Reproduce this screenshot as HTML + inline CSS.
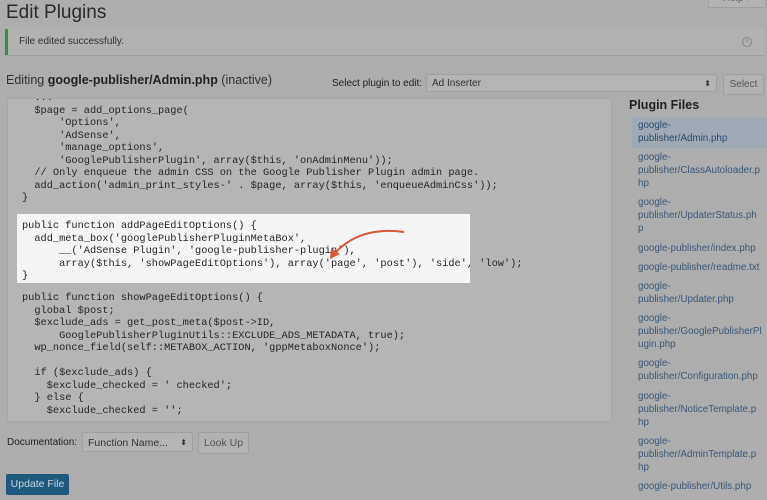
<!DOCTYPE html>
<html><head><meta charset="utf-8"><style>
body{margin:0;width:767px;height:500px;background:#adadad;font-family:"Liberation Sans",sans-serif;position:relative;overflow:hidden;color:#222}
.a{position:absolute}
pre{margin:0;font-family:"Liberation Mono",monospace;font-size:10.3px;line-height:12.5px;color:#262626}
.side div{color:#3b5878;font-size:9.8px;line-height:13px;margin-bottom:6.2px;padding-left:6px;white-space:nowrap}
</style></head><body>
<div class="a" style="left:708px;top:-8px;width:56px;height:14px;background:#b3b3b3;border:1px solid #9f9f9f;border-radius:2px;font-size:10px;color:#666;text-align:center;line-height:12px">Help ▾</div>
<div class="a" style="left:6px;top:2px;font-size:19px;color:#2a2a2a">Edit Plugins</div>
<div class="a" style="left:5px;top:29px;width:757px;height:26px;background:#b1b1b1;border-left:3px solid #3f8a3f;box-shadow:0 1px 1px rgba(0,0,0,.1)"></div>
<div class="a" style="left:19px;top:36px;font-size:10px;color:#333">File edited successfully.</div>
<div class="a" style="left:742px;top:37px;width:8px;height:8px;border:1px solid #888;border-radius:50%;font-size:7px;line-height:8px;text-align:center;color:#888">×</div>
<div class="a" style="left:6px;top:73px;font-size:12.5px;color:#333">Editing <b style="color:#222">google-publisher/Admin.php</b> (inactive)</div>
<div class="a" style="left:332px;top:78px;font-size:10px;color:#222">Select plugin to edit:</div>
<div class="a" style="left:426px;top:74px;width:291px;height:18px;background:#b4b4b4;border:1px solid #a0a0a0;border-radius:2px;font-size:10px;line-height:18px;color:#333;padding-left:5px;box-sizing:border-box">Ad Inserter<span style="position:absolute;right:5px;font-size:8px">⬍</span></div>
<div class="a" style="left:723px;top:74px;width:39px;height:19px;background:#b2b2b2;border:1px solid #9f9f9f;border-radius:2px;font-size:10px;line-height:19px;text-align:center;color:#555">Select</div>
<div class="a" style="left:7px;top:98px;width:603px;height:322px;background:#b5b5b5;border:1px solid #a6a6a6;overflow:hidden">
<pre style="position:absolute;left:14px;top:-7px">  ...
  $page = add_options_page(
      'Options',
      'AdSense',
      'manage_options',
      'GooglePublisherPlugin', array($this, 'onAdminMenu'));
  // Only enqueue the admin CSS on the Google Publisher Plugin admin page.
  add_action('admin_print_styles-' . $page, array($this, 'enqueueAdminCss'));
}







public function showPageEditOptions() {
  global $post;
  $exclude_ads = get_post_meta($post->ID,
      GooglePublisherPluginUtils::EXCLUDE_ADS_METADATA, true);
  wp_nonce_field(self::METABOX_ACTION, 'gppMetaboxNonce');

  if ($exclude_ads) {
    $exclude_checked = ' checked';
  } else {
    $exclude_checked = '';</pre>
</div>
<div class="a" style="left:17px;top:214px;width:453px;height:69px;background:#f5f5f5"></div>
<pre class="a" style="left:22px;top:220px">public function addPageEditOptions() {
  add_meta_box('googlePublisherPluginMetaBox',
      __('AdSense Plugin', 'google-publisher-plugin'),
      array($this, 'showPageEditOptions'), array('page', 'post'), 'side', 'low');
}</pre>
<svg class="a" style="left:0;top:0" width="767" height="500"><path d="M404 232 Q360 226 335 253" fill="none" stroke="#d9573c" stroke-width="2"/><path d="M330 259 L331 248 L340 254 Z" fill="#d9573c"/></svg>
<div class="a" style="left:7px;top:437px;font-size:10px;color:#222">Documentation:</div>
<div class="a" style="left:82px;top:432px;width:111px;height:20px;background:#b4b4b4;border:1px solid #a0a0a0;border-radius:2px;font-size:10.5px;line-height:20px;padding-left:5px;box-sizing:border-box;color:#333">Function Name...<span style="position:absolute;right:5px;font-size:8px">⬍</span></div>
<div class="a" style="left:198px;top:432px;width:49px;height:20px;background:#b2b2b2;border:1px solid #9f9f9f;border-radius:2px;font-size:10.5px;line-height:20px;text-align:center;color:#555">Look Up</div>
<div class="a" style="left:6px;top:474px;width:63px;height:21px;background:#1f5a7e;border-radius:2px;font-size:10.5px;line-height:21px;text-align:center;color:#c8d6e0">Update File</div>
<div class="a" style="left:629px;top:98px;font-size:12.5px;font-weight:bold;color:#222">Plugin Files</div>
<div class="a" style="left:632px;top:117px;width:135px;height:31px;background:#9fa9b3"></div>
<div class="a side" style="left:632px;top:119px">
<div style="color:#2a4a6e">google-<br>publisher/Admin.php</div>
<div>google-<br>publisher/ClassAutoloader.p<br>hp</div>
<div>google-<br>publisher/UpdaterStatus.ph<br>p</div>
<div>google-publisher/index.php</div>
<div>google-publisher/readme.txt</div>
<div>google-<br>publisher/Updater.php</div>
<div>google-<br>publisher/GooglePublisherPl<br>ugin.php</div>
<div>google-<br>publisher/Configuration.php</div>
<div>google-<br>publisher/NoticeTemplate.p<br>hp</div>
<div>google-<br>publisher/AdminTemplate.p<br>hp</div>
<div>google-publisher/Utils.php</div>
</div>
</body></html>
